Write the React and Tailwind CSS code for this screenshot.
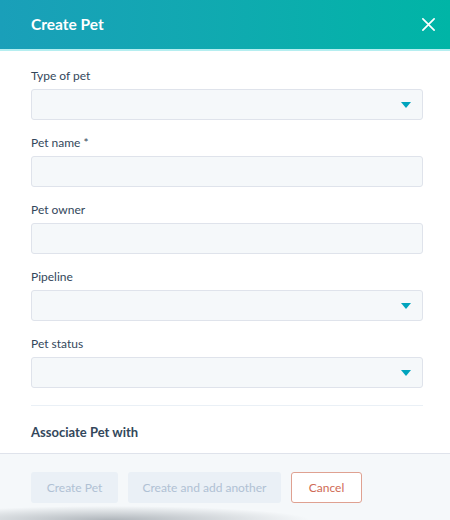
function Caret() {
    return (
        <svg width="10" height="6" viewBox="0 0 10 6" className="shrink-0">
            <path d="M0 0h10L5 6z" fill="#00a4bd" />
        </svg>
    );
}

function Field({ label, select }) {
    return (
        <div className="flex flex-col">
            <label className="text-[12px] text-[#33475b] mb-[6px] leading-[14px]">{label}</label>
            <div className="h-[31px] bg-[#f5f8fa] border border-[#dfe3eb] rounded-[3px] flex items-center justify-end pr-[11px]">
                {select && <Caret />}
            </div>
        </div>
    );
}

export default function App() {
    return (
        <div className="w-[450px] h-[520px] bg-white flex flex-col overflow-hidden" style={{ fontFamily: 'Lato, "Noto Sans", sans-serif' }}>
            {/* Header */}
            <div className="h-[51px] shrink-0 bg-gradient-to-r from-[#1a9fb9] to-[#00b5a6] border-b-2 border-[#b5eef0] flex items-center justify-between pl-[31px] pr-[14px]">
                <h1 className="text-white text-[15.5px] font-bold leading-none">Create Pet</h1>
                <svg width="15" height="15" viewBox="0 0 16 16">
                    <path d="M2 2l12 12M14 2L2 14" stroke="white" strokeWidth="1.8" strokeLinecap="round" />
                </svg>
            </div>

            {/* Body */}
            <div className="flex-1 pl-[31px] pr-[27px] pt-[18px]">
                <div className="flex flex-col gap-[16px]">
                    <Field label="Type of pet" select />
                    <Field label="Pet name *" />
                    <Field label="Pet owner" />
                    <Field label="Pipeline" select />
                    <Field label="Pet status" select />
                </div>
                <div className="mt-[17px] border-t border-[#eaf0f6]" />
                <h2 className="text-[13px] font-bold text-[#33475b] pt-[18px] leading-[16px]">Associate Pet with</h2>
            </div>

            {/* Footer */}
            <div className="h-[67px] shrink-0 border-t border-[#dfe3eb] flex items-start gap-[10px] px-[31px] pt-[18px] [background:radial-gradient(ellipse_200px_14px_at_110px_100%,rgba(90,100,110,0.45),transparent),#f5f8fa]">
                <button className="h-[31px] w-[87px] bg-[#eaf0f6] text-[#b0c1d4] text-[12px] rounded-[3px]">Create Pet</button>
                <button className="h-[31px] w-[153px] bg-[#eaf0f6] text-[#b0c1d4] text-[12px] rounded-[3px]">Create and add another</button>
                <button className="h-[31px] w-[71px] bg-white border border-[#dfa191] text-[#cf6a55] text-[12px] rounded-[3px]">Cancel</button>
            </div>
        </div>
    );
}
